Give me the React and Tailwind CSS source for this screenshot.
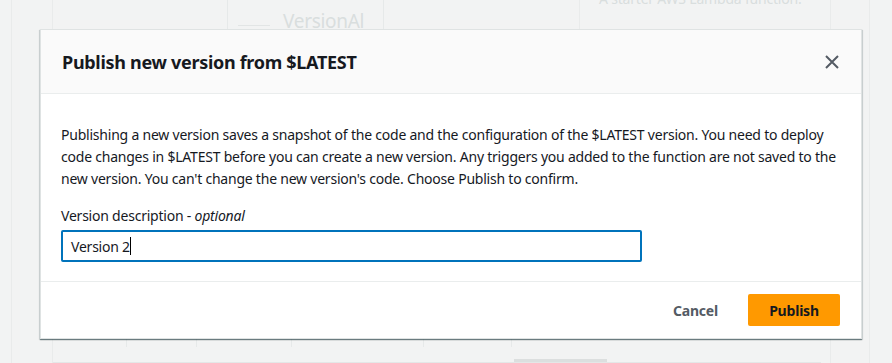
import React from "react";

export default function App() {
  const font = { fontFamily: '"Noto Sans", "Open Sans", Arial, sans-serif' };
  return (
    <div className="relative w-[892px] h-[363px] overflow-hidden bg-[#f2f3f3]" style={font}>
      {/* dimmed background page */}
      <div className="flex h-[363px]">
        <div className="w-[12px] border-r border-[#e9ebeb]" />
        <div className="w-[40px]" />
        <div className="w-[779px] border-l border-r border-[#e9ebeb] flex flex-col">
          <div className="flex h-[29px]">
            <div className="w-[175px] border-r border-[#e6e9e9]" />
            <div className="w-[156px] border-r border-[#e6e9e9] flex items-end pl-[10px] gap-[13px] overflow-hidden">
              <div className="w-[32px] h-[2px] mb-[2px] border-t border-[#e2e5e5]" />
              <div className="text-[19px] leading-[22px] text-[#d9dede] -mb-[3px] tracking-[-0.3px]">VersionAl</div>
            </div>
            <div className="w-[196px] border-r border-[#e9ebeb]" />
            <div className="flex-1 pl-[19px] overflow-hidden">
              <div className="text-[14px] leading-[14px] text-[#d9dede] -mt-[8px] tracking-[-0.2px]">A starter AWS Lambda function.</div>
            </div>
          </div>
          <div className="flex-1" />
          <div className="flex h-[8px] mb-[12px]">
            <div className="w-[74px] border-r border-[#e6e9e9]" />
            <div className="w-[70px] border-r border-[#e6e9e9]" />
            <div className="w-[95px] border-r border-[#e6e9e9]" />
            <div className="w-[132px] border-r border-[#e6e9e9]" />
            <div className="w-[88px] border-r border-[#e6e9e9]" />
          </div>
          <div className="flex h-[4px] w-[768px] border-b border-[#e4e7e7]">
            <div className="w-[461px]" />
            <div className="w-[93px] h-[3px] bg-[#dcdfdf]" />
          </div>
        </div>
        <div className="w-[39px] border-r border-[#e9ebeb]" />
      </div>

      {/* modal */}
      <div className="absolute left-[40px] top-[29px] w-[822px] bg-white border border-[#dfe3e3] shadow-[0_1px_1px_0_rgba(0,28,36,0.45),1px_1px_1px_0_rgba(0,28,36,0.1),-1px_1px_1px_0_rgba(0,28,36,0.1)]">
        <div className="h-[64px] bg-[#fafafa] border-b border-[#eaeded] flex items-center justify-between pl-[21px] pr-[21px]">
          <div className="text-[18px] font-bold text-[#16191f] leading-[22px] tracking-[-0.3px]">Publish new version from $LATEST</div>
          <svg width="16" height="16" viewBox="0 0 16 16">
            <path d="M2 2 L14 14 M14 2 L2 14" stroke="#545b64" strokeWidth="2" fill="none" />
          </svg>
        </div>
        <div className="pl-[20px] pr-[20px] pt-[30px] pb-[19px] tracking-[-0.22px]">
          <p className="text-[14px] leading-[22px] text-[#16191f] m-0">
            Publishing a new version saves a snapshot of the code and the configuration of the $LATEST version. You need to deploy code changes in $LATEST before you can create a new version. Any triggers you added to the function are not saved to the new version. You can't change the new version's code. Choose Publish to confirm.
          </p>
          <div className="mt-[15px] text-[14px] leading-[22px] text-[#16191f]">
            Version description - <i>optional</i>
          </div>
          <div className="mt-[3px] w-[581px] h-[32px] border-2 border-[#0073bb] rounded-[2px] flex items-center pl-[8px] text-[14px] text-[#16191f]">
            Version 2<span className="inline-block w-[1px] h-[18px] bg-[#000]" />
          </div>
        </div>
        <div className="border-t border-[#eaeded] h-[57px] flex items-center justify-end pr-[21px] tracking-[-0.2px]">
          <button className="text-[14px] font-bold text-[#545b64] px-[20px] h-[32px]">Cancel</button>
          <button className="ml-[10px] w-[92px] h-[32px] bg-[#ff9900] rounded-[2px] text-[14px] font-bold text-[#16191f]">Publish</button>
        </div>
      </div>
    </div>
  );
}
